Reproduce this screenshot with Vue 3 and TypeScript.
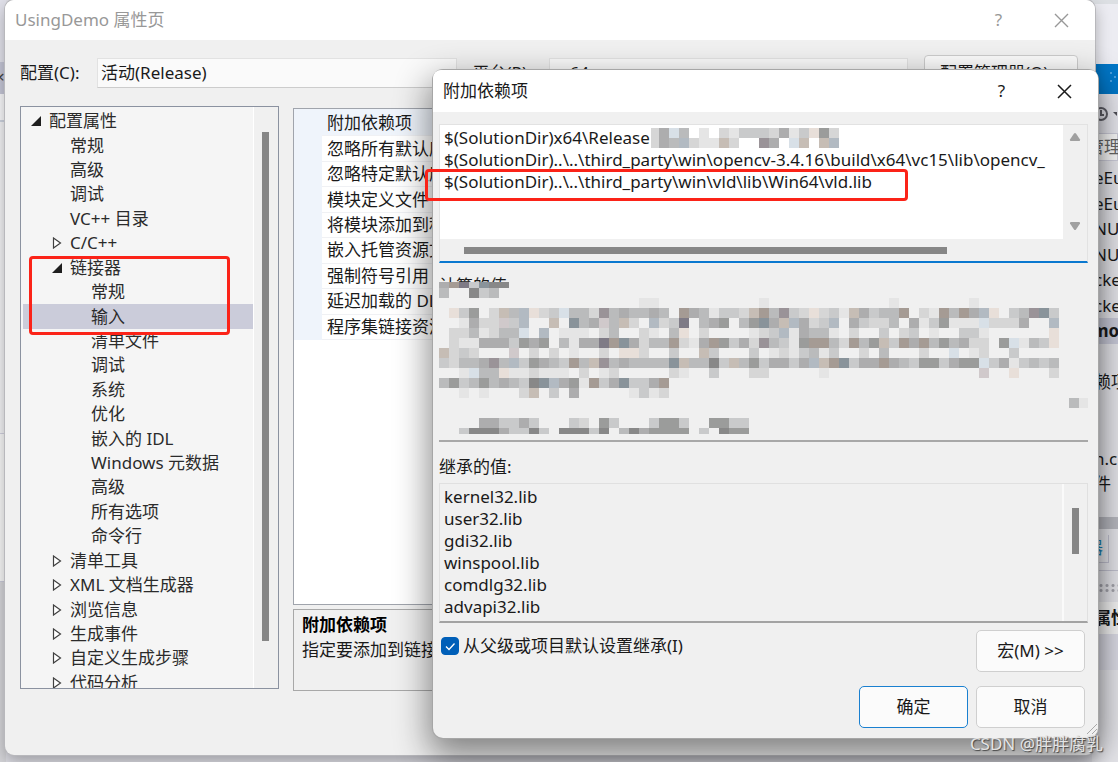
<script setup lang="ts">
import { ref } from 'vue'

interface TreeNode {
  label: string
  level: number
  state?: 'open' | 'closed'
  selected?: boolean
}

interface Cell {
  x: number
  y: number
  fill: string
}

const tree: TreeNode[] = [
  { label: '配置属性', level: 0, state: 'open' },
  { label: '常规', level: 1 },
  { label: '高级', level: 1 },
  { label: '调试', level: 1 },
  { label: 'VC++ 目录', level: 1 },
  { label: 'C/C++', level: 1, state: 'closed' },
  { label: '链接器', level: 1, state: 'open' },
  { label: '常规', level: 2 },
  { label: '输入', level: 2, selected: true },
  { label: '清单文件', level: 2 },
  { label: '调试', level: 2 },
  { label: '系统', level: 2 },
  { label: '优化', level: 2 },
  { label: '嵌入的 IDL', level: 2 },
  { label: 'Windows 元数据', level: 2 },
  { label: '高级', level: 2 },
  { label: '所有选项', level: 2 },
  { label: '命令行', level: 2 },
  { label: '清单工具', level: 1, state: 'closed' },
  { label: 'XML 文档生成器', level: 1, state: 'closed' },
  { label: '浏览信息', level: 1, state: 'closed' },
  { label: '生成事件', level: 1, state: 'closed' },
  { label: '自定义生成步骤', level: 1, state: 'closed' },
  { label: '代码分析', level: 1, state: 'closed' },
]

const properties = [
  '附加依赖项',
  '忽略所有默认库',
  '忽略特定默认库',
  '模块定义文件',
  '将模块添加到程序集',
  '嵌入托管资源文件',
  '强制符号引用',
  '延迟加载的 DLL',
  '程序集链接资源',
]

const files = ['eEu', 'eEu', 'NUt', 'NUt', 'cke', 'cke', 'mo', '', '赖项', '', '', 'n.c', '件']

const dependencies = ref(
  [
    '$(SolutionDir)x64\\Release',
    '$(SolutionDir)..\\..\\third_party\\win\\opencv-3.4.16\\build\\x64\\vc15\\lib\\opencv_',
    '$(SolutionDir)..\\..\\third_party\\win\\vld\\lib\\Win64\\vld.lib',
  ].join('\n'),
)
const inherited = ['kernel32.lib', 'user32.lib', 'gdi32.lib', 'winspool.lib', 'comdlg32.lib', 'advapi32.lib'].join('\n')
const inherit = ref(true)

const palette: Record<string, string> = {
  a: '#e5e5e5',
  b: '#d6d6d6',
  c: '#c9cacb',
  d: '#babbbc',
  e: '#adadae',
  f: '#9b9c9b',
  g: '#888888',
  w: '#e8dfd9',
  v: '#c6bdb5',
  x: '#a59b94',
  y: '#d8e0e7',
  z: '#b2bac2',
  u: '#89939a',
  p: '#d0c9cb',
  q: '#9a9398',
  r: '#7f7b86',
}

function mosaic(rows: string[]): Cell[] {
  return rows.flatMap((row, r) =>
    [...row].flatMap((key, c) => (key === '.' ? [] : [{ x: c * 10, y: r * 10, fill: palette[key] }])),
  )
}

const pathMosaic = mosaic(['beyd.a.bacccbeacwfb', 'bedzbaavb..qe.yv.vz'])
const labelMosaic = mosaic(['exrcugg', 'd..gcd'])
const valueMosaic = mosaic([
  '....................aa..........a............a.......a',
  '.wcf.bvdzwbcyddbqdedded.xedaccbvxdqcbwbcavecddx.baxdxezw.cdquc',
  '..aebbpcz..v.udepdvb.zbcr.def.dfuevzebcz.ecbbd.eacfaaaybbbe..z',
  '.bbdabddy.z.aaa.bd..ba.dw.b....abczaedda.b..c.bc.a..cca......w',
  '.baaeeecfef.daeerxuebddxbaexfcebqdcafxxdbxdfvcxexdfdebb.fyadcw',
  'vbcb...p.b.b.a..b.wwb..c..vc...c.abacdac..b.d...b..y.ab..c....',
  'cbddeqdzcfedcxdvqdedddduvddgcvdfceecezvxuceexedcffceffyceacdcd',
  '..ayddwaabaaa.b.ab.....ba..c...bb.....a...............p..w...b',
  'dfcdfdedcguzefaxceuccex',
  '..a.a...bv.c.e.....acab',
  '...............................................................da',
  '',
  '....eeccec...cb.fc...cffc..ffcc',
  '..cgggeccgc.gggcg.dgeffff.c.gff',
])
</script>

<template>
  <div class="desktop">
    <aside class="edge-left" aria-hidden="true">
      <div class="l-top"></div>
      <div class="l-tab">×</div>
      <div class="l-white"></div>
      <div class="l-mid"></div>
      <div class="l-code"></div>
      <div class="l-bottom"></div>
    </aside>

    <aside class="edge-right">
      <div class="r-head"></div>
      <div class="r-blue">
        <svg width="16" height="10" viewBox="0 0 16 10">
          <g fill="#4aa0df"><path d="M0 0h2v2H0zM8 0h2v2H8zM4 4h2v2H4zM12 4h2v2h-2zM0 8h2v2H0zM8 8h2v2H8z" /></g>
        </svg>
      </div>
      <div class="r-tools">
        <svg width="22" height="16" viewBox="0 0 22 16">
          <circle cx="6" cy="8" r="6" fill="none" stroke="#606068" stroke-width="2" />
          <path d="M6 4v5h3" fill="none" stroke="#606068" stroke-width="2" />
          <path d="M18 6h8l-4 4z" fill="#505058" />
        </svg>
      </div>
      <div class="r-search">管理</div>
      <ul class="r-files">
        <li v-for="(name, i) in files" :key="i" :class="{ current: name === 'mo' }">{{ name }}</li>
      </ul>
      <div class="r-bar"></div>
      <div class="r-tabs"><span>器</span></div>
      <div class="r-dots"></div>
      <div class="r-props">属性</div>
      <div class="r-panel"></div>
    </aside>

    <section class="window sheet">
      <header class="titlebar">
        <h1>UsingDemo 属性页</h1>
        <button type="button" class="sys help" aria-label="帮助">?</button>
        <button type="button" class="sys" aria-label="关闭">
          <svg width="15" height="15" viewBox="0 0 15 15"><path d="M1 1l13 13M14 1L1 14" fill="none" stroke="currentColor" stroke-width="1.4" /></svg>
        </button>
      </header>

      <div class="config">
        <label for="cfg">配置(C):</label>
        <select id="cfg"><option>活动(Release)</option></select>
        <label for="platform" class="second">平台(P):</label>
        <select id="platform"><option>x64</option></select>
        <button type="button" class="manager">配置管理器(O)...</button>
      </div>

      <div class="panes">
        <nav class="tree">
          <ul role="tree">
            <li v-for="(node, i) in tree" :key="i" role="treeitem" :class="['level-' + node.level, { selected: node.selected }]">
              <svg class="arrow" width="12" height="12" viewBox="0 0 12 12">
                <path v-if="node.state === 'open'" d="M11 1v10H1z" fill="#1e1e1e" />
                <path v-else-if="node.state === 'closed'" d="M2.500 1v10l7-5z" fill="#fff" stroke="#404040" stroke-width="1.200" />
              </svg>
              <span>{{ node.label }}</span>
            </li>
          </ul>
          <div class="gutter"><div class="thumb"></div></div>
          <div class="mark mark-tree"></div>
        </nav>
        <div class="details">
          <div class="grid">
            <ul>
              <li v-for="name in properties" :key="name">{{ name }}</li>
            </ul>
          </div>
          <div class="description">
            <strong>附加依赖项</strong>
            <p>指定要添加到链接命令行的附加项</p>
          </div>
        </div>
      </div>
    </section>

    <section class="window dialog" role="dialog" aria-labelledby="dlg-title">
      <header class="titlebar">
        <h2 id="dlg-title">附加依赖项</h2>
        <button type="button" class="sys help" aria-label="帮助">?</button>
        <button type="button" class="sys" aria-label="关闭">
          <svg width="15" height="15" viewBox="0 0 15 15"><path d="M1 1l13 13M14 1L1 14" fill="none" stroke="currentColor" stroke-width="1.5" /></svg>
        </button>
      </header>

      <div class="body">
        <div class="editor">
          <div class="editor-row">
            <textarea v-model="dependencies" rows="3" wrap="off" spellcheck="false" aria-label="附加依赖项"></textarea>
            <div class="vscroll">
              <svg width="12" height="10" viewBox="0 0 12 10"><path d="M5 1.500q1-1 2 0l4 6q.5 1.500-1 1.500H2q-1.500 0-1-1.500z" fill="#a0a0a0" /></svg>
              <svg width="12" height="10" viewBox="0 0 12 10"><path d="M5 8.500q1 1 2 0l4-6q.5-1.500-1-1.500H2q-1.500 0-1 1.500z" fill="#a0a0a0" /></svg>
            </div>
          </div>
          <div class="hscroll"><div></div></div>
          <svg class="cells path-cells" width="188" height="20" viewBox="2 0 188 20" shape-rendering="crispEdges">
            <rect v-for="(c, i) in pathMosaic" :key="i" :x="c.x" :y="c.y" width="10" height="10" :fill="c.fill" />
          </svg>
          <div class="mark mark-line"></div>
        </div>

        <div class="caption computed">
          计算的值:
          <svg class="cells label-cells" width="70" height="16" viewBox="0 4 70 16" shape-rendering="crispEdges">
            <rect v-for="(c, i) in labelMosaic" :key="i" :x="c.x" :y="c.y" width="10" height="10" :fill="c.fill" />
          </svg>
        </div>
        <div class="value">
          <svg class="cells" width="650" height="136" shape-rendering="crispEdges">
            <rect v-for="(c, i) in valueMosaic" :key="i" :x="c.x" :y="c.y" width="10" height="10" :fill="c.fill" />
          </svg>
        </div>

        <label class="caption inherited-label" for="inherited">继承的值:</label>
        <div class="inherited">
          <textarea id="inherited" :value="inherited" rows="6" readonly wrap="off" spellcheck="false"></textarea>
          <div class="rail"><div></div></div>
        </div>

        <div class="options">
          <label class="check">
            <input v-model="inherit" type="checkbox" />
            <svg width="18" height="18" viewBox="0 0 18 18"><path d="M5 9.500l3 3 5.500-6" fill="none" stroke="#fff" stroke-width="1.300" /></svg>
            <span>从父级或项目默认设置继承(I)</span>
          </label>
          <button type="button" class="btn macro">宏(M) &gt;&gt;</button>
        </div>
        <footer>
          <button type="button" class="btn primary">确定</button>
          <button type="button" class="btn">取消</button>
        </footer>
      </div>
      <svg class="grip" width="12" height="12" viewBox="0 0 12 12"><path d="M1 11L11 1M6 11l5-5" stroke="#a8a8a8" /></svg>
    </section>

    <p class="watermark">CSDN @胖胖腐乳</p>
  </div>
</template>

<style>
html,
body {
  margin: 0;
  overflow: hidden;
}
</style>

<style scoped>
* {
  box-sizing: border-box;
}

.desktop {
  position: relative;
  min-height: 100vh;
  overflow: hidden;
  background: #dddde4;
  color: #1a1a1a;
  font-family: 'Noto Sans', 'Noto Sans CJK SC', sans-serif;
  font-size: 17px;
  line-height: 22px;
}

ul,
p,
h1,
h2 {
  margin: 0;
  padding: 0;
  list-style: none;
  font-size: 17px;
  font-weight: 400;
}

button,
select,
textarea {
  font: inherit;
  color: inherit;
}

.edge-left {
  position: absolute;
  inset: 0 auto 0 0;
  width: 6px;
  overflow: hidden;
  display: flex;
  flex-direction: column;
  line-height: 30px;
}

.l-top { height: 62px; background: #e1e1ea; }
.l-tab { height: 32px; background: #c5c6d6; color: #444; text-indent: -5px; }
.l-white { height: 28px; background: #f8f8fa; border-bottom: 2px solid #ccd2de; }
.l-mid { height: 312px; background: #f1f1f3; border-bottom: 1px solid #cfcfdd; }
.l-code { height: 148px; background: #f6f6f6; border-bottom: 1px solid #c9c9d8; }
.l-bottom { flex: 1; background: #d4d4d8; }

.edge-right {
  position: absolute;
  inset: 0 0 0 auto;
  width: 26px;
  overflow: hidden;
  background: #e6e6eb;
  line-height: 26px;
  white-space: nowrap;
}

.r-head { height: 64px; background: #ececf2; border-top: 4px solid #dcdfe3; }
.r-blue { height: 30px; padding: 8px 0 0 18px; background: #0077c8; line-height: 0; }
.r-tools { display: flex; align-items: center; height: 39px; padding-left: 3px; background: #e8e8ef; }
.r-search { height: 28px; margin-left: -6px; border: 1px solid #cfcfdc; background: #fbfbfb; color: #666; }
.r-files { display: grid; grid-auto-rows: 1fr; height: 332px; margin-top: 4px; padding-left: 2px; line-height: 25px; }
.r-files .current { margin-left: -2px; background: #c9cad9; font-weight: 700; }
.r-bar { height: 12px; margin-top: 20px; background: #b8b9c0; }
.r-tabs { height: 42px; padding-top: 6px; border-bottom: 1px solid #c2c2d0; color: #1583b5; }
.r-tabs span { display: block; width: 17px; height: 28px; overflow: hidden; border: 1px solid #c2c2d0; border-width: 0 1px 1px 0; text-indent: -6px; }
.r-dots { height: 31px; background: radial-gradient(circle, #a5a5ad 1px, transparent 2px) 0 12px / 6px 5px repeat; background-clip: content-box; padding: 12px 0 9px; }
.r-props { height: 32px; background: #f4f4f4; font-weight: 700; line-height: 32px; padding-left: 2px; }
.r-panel { height: 36px; background: #dcdce6; }

.window {
  position: absolute;
  background: #f0f0f0;
  border-radius: 9px;
}

.titlebar {
  display: flex;
  align-items: center;
  background: #fff;
  border-radius: 8px 8px 0 0;
}

.titlebar h1,
.titlebar h2 {
  flex: 1;
}

.sys {
  width: 64px;
  padding: 0;
  border: 0;
  background: none;
  line-height: 0;
}

.help {
  padding-left: 3px;
  line-height: 22px;
}

.sheet {
  inset: 0 23px 7px 5px;
  overflow: hidden;
  box-shadow: 0 0 0 1px #b8b8bc, 0 6px 16px rgba(0, 0, 0, 0.3);
}

.sheet .titlebar {
  height: 40px;
  padding: 0 2px 0 10px;
  color: #989898;
}

.config {
  display: flex;
  align-items: center;
  height: 36px;
  margin: 15px 17px 0 15px;
}

.config label {
  width: 77px;
}

.config .second {
  margin-left: 16px;
  width: 76px;
}

.config select {
  flex: 1;
  height: 30px;
  padding: 0 3px;
  appearance: none;
  border: 1px solid #e2e2e2;
  border-bottom-color: #ccc;
  border-radius: 0;
  background: #fafafa;
}

.config #platform {
  text-indent: 8px;
}

.manager {
  width: 154px;
  height: 36px;
  margin-left: 16px;
  padding: 0;
  border: 1px solid #ccc;
  border-radius: 4px;
  background: #fbfbfb;
}

.panes {
  display: flex;
  gap: 14px;
  margin: 15px 17px 0 15px;
}

.tree {
  position: relative;
  display: flex;
  width: 259px;
  height: 583px;
  overflow: hidden;
  padding-left: 2px;
  border: 1px solid #8b92a0;
  background: #f5f5f5;
  color: #2b2b2b;
}

.tree ul {
  flex: 1;
  display: grid;
  grid-auto-rows: 1fr;
  height: 586px;
  margin-top: 2px;
}

.tree li {
  display: flex;
  align-items: center;
  gap: 7px;
}

.level-0 { padding-left: 7px; }
.level-1 { padding-left: 28px; }
.level-2 { padding-left: 49px; }
.selected { background: #cbccda; }

.gutter {
  width: 25px;
  padding: 25px 8px 0;
  border-left: 1px solid #fff;
  background: #f0f0f0;
}

.gutter .thumb {
  width: 7px;
  height: 509px;
  background: #868686;
}

.mark {
  position: absolute;
  border: 3px solid #fb2318;
  border-radius: 4px;
}

.mark-tree {
  left: 8px;
  top: 149px;
  width: 201px;
  height: 79px;
}

.details {
  flex: 1;
  min-width: 0;
  padding-top: 2px;
}

.grid {
  height: 497px;
  border: 1px solid #a0a4ac;
  background: #fff;
}

.grid ul {
  display: grid;
  grid-auto-rows: 1fr;
  height: 231px;
  padding: 2px 0 0 28px;
  background: #eff4fb;
}

.grid li {
  display: flex;
  align-items: center;
  padding-left: 5px;
  border-bottom: 1px solid #f0f1f4;
  background: #fff;
}

.grid li:first-child {
  background: #eff4fb;
}

.description {
  height: 82px;
  margin-top: 4px;
  padding: 2px 8px;
  border: 1px solid #a8a8a8;
  line-height: 25px;
}

.description strong {
  color: #000;
}

.dialog {
  left: 433px;
  right: 20px;
  top: 70px;
  border-radius: 10px;
  box-shadow: 0 0 0 1px #a6a6a6, 0 14px 34px 4px rgba(0, 0, 0, 0.46);
}

.dialog .titlebar {
  height: 42px;
  padding: 0 2px 0 10px;
}

.body {
  display: flex;
  flex-direction: column;
  padding: 12px 10px 10px 6px;
}

.editor {
  position: relative;
  border: 1px solid #e2e2e2;
  border-bottom: 2px solid #0a78cf;
  background: #fff;
}

.editor-row {
  display: flex;
  height: 114px;
}

textarea {
  display: block;
  flex: 1;
  min-width: 0;
  height: auto;
  margin: 0;
  padding: 2px 6px 0 4px;
  border: 0;
  outline: 0;
  resize: none;
  overflow: hidden;
  background: none;
  white-space: pre;
}

.vscroll {
  display: flex;
  flex-direction: column;
  justify-content: space-between;
  align-items: center;
  width: 24px;
  padding: 7px 0 8px;
  background: #f0f0f0;
}

.hscroll {
  height: 22px;
  padding: 8px 140px 0 24px;
  background: #f0f0f0;
}

.hscroll div {
  height: 7px;
  background: #868686;
}

.cells {
  display: block;
}

.path-cells {
  position: absolute;
  left: 211px;
  top: 3px;
}

.mark-line {
  left: -15px;
  top: 44px;
  width: 483px;
  height: 32px;
}

.caption {
  line-height: 24px;
}

.computed {
  position: relative;
  width: 70px;
  height: 24px;
  margin-top: 11px;
  overflow: hidden;
  white-space: nowrap;
}

.label-cells {
  position: absolute;
  left: 0;
  top: 8px;
  background: #f0f0f0;
}

.value {
  height: 144px;
  overflow: hidden;
  border-bottom: 2px solid #a8a8a8;
}

.inherited-label {
  margin-top: 13px;
}

.inherited {
  display: flex;
  height: 140px;
  margin-top: 4px;
  border: 1px solid #e0e0e0;
  border-bottom: 2px solid #a3a3a3;
}

.rail {
  width: 25px;
  padding: 24px 8px 0;
  border-left: 2px solid #fafafa;
}

.rail div {
  width: 7px;
  height: 46px;
  background: #868686;
}

.options {
  display: flex;
  justify-content: space-between;
  align-items: flex-start;
  margin: 7px 3px 14px 2px;
}

.check {
  position: relative;
  display: flex;
  align-items: center;
  gap: 4px;
  margin-top: 4px;
  line-height: 24px;
}

.check input {
  width: 18px;
  height: 18px;
  margin: 0;
  appearance: none;
  border: 1px solid #777;
  border-radius: 4px;
}

.check input:checked {
  border-color: #005fb8;
  background: #005fb8;
}

.check svg {
  position: absolute;
  left: 0;
}

.btn {
  width: 109px;
  height: 42px;
  padding: 0;
  border: 1px solid #cfcfcf;
  border-radius: 5px;
  background: #fbfbfb;
}

.primary {
  border-color: #1a80d0;
}

footer {
  display: flex;
  justify-content: flex-end;
  gap: 8px;
  margin-right: 3px;
}

.grip {
  position: absolute;
  right: 0;
  bottom: 3px;
}

.watermark {
  position: absolute;
  right: 15px;
  bottom: 6px;
  color: #e4e4e4;
  line-height: 24px;
  text-shadow: 1px 1px 1px #444;
}
</style>
